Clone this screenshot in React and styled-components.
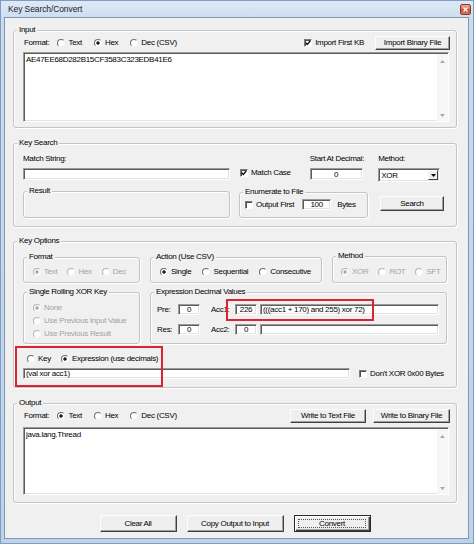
import React from "react";
import styled, { createGlobalStyle } from "styled-components";

const GlobalStyle = createGlobalStyle`
  html, body {
    margin: 0;
    padding: 0;
  }
  body {
    width: 474px;
    height: 544px;
    overflow: hidden;
    font-family: "Liberation Sans", Arial, sans-serif;
    font-size: 8px;
    letter-spacing: -0.3px;
    line-height: 10px;
    color: #000;
  }
`;

const Window = styled.div`
  box-sizing: border-box;
  width: 474px;
  height: 544px;
  display: flex;
  flex-direction: column;
  border: 1px solid #7f9dc0;
  background: linear-gradient(180deg, #dde9f7 0%, #c9dbef 4%, #bed3ea 100%);
`;

const TitleBar = styled.div`
  height: 16px;
  flex-shrink: 0;
  display: flex;
  justify-content: space-between;
  padding: 0 2px 0 7px;
`;

const Title = styled.span`
  font-size: 8.5px;
  letter-spacing: -0.1px;
  line-height: 16px;
  color: #1c1c1c;
`;

const CloseBtn = styled.div`
  box-sizing: border-box;
  width: 11px;
  height: 11px;
  margin-top: 3px;
  display: flex;
  align-items: center;
  justify-content: center;
  border: 1px solid #8a3a2c;
  border-radius: 2px;
  background: linear-gradient(180deg, #eba596 0%, #d86f58 48%, #c2452c 52%, #d97553 100%);
`;

const Client = styled.div`
  flex: 1;
  box-sizing: border-box;
  margin: 0 4px 4px 3px;
  padding: 12px 11px 0 8px;
  display: flex;
  flex-direction: column;
  border: 1px solid #8396ad;
  background: #f0f0f0;
`;

const Group = styled.div`
  position: relative;
  box-sizing: border-box;
  flex-shrink: 0;
  width: ${({ $w }) => ($w ? `${$w}px` : "auto")};
  height: ${({ $h }) => `${$h}px`};
  margin: ${({ $m }) => $m || "0"};
  padding: ${({ $pad }) => $pad || "0"};
  border: 1px solid #c4c4c4;
  border-radius: 3px;
  box-shadow: inset 1px 1px 0 #fff, 1px 1px 0 #fff;
`;

const Caption = styled.span`
  position: absolute;
  top: -6px;
  left: 3px;
  padding: 0 2px;
  line-height: 10px;
  white-space: nowrap;
  background: #f0f0f0;
`;

const Row = styled.div`
  display: flex;
  align-items: ${({ $align }) => $align || "center"};
  height: ${({ $h }) => ($h ? `${$h}px` : "auto")};
  margin-top: ${({ $mt }) => ($mt ? `${$mt}px` : "0")};
  margin-left: ${({ $ml }) => ($ml ? `${$ml}px` : "0")};
  gap: ${({ $gap }) => ($gap ? `${$gap}px` : "0")};
`;

const Column = styled.div`
  display: flex;
  flex-direction: column;
  gap: ${({ $gap }) => ($gap ? `${$gap}px` : "0")};
  margin-left: ${({ $ml }) => ($ml ? `${$ml}px` : "0")};
  margin-top: ${({ $mt }) => ($mt ? `${$mt}px` : "0")};
`;

const Text = styled.span`
  white-space: nowrap;
  color: ${({ $off }) => ($off ? "#a3a3a3" : "#000")};
  width: ${({ $w }) => ($w ? `${$w}px` : "auto")};
  margin-left: ${({ $ml }) => ($ml ? `${$ml}px` : "0")};
  flex-shrink: 0;
`;

const Spacer = styled.div`
  flex: 1;
`;

const OptionLabel = styled.span`
  display: inline-flex;
  align-items: center;
  gap: 3px;
  height: 10px;
  white-space: nowrap;
  color: ${({ $off }) => ($off ? "#a3a3a3" : "#000")};
`;

const RadioDot = styled.span`
  box-sizing: border-box;
  width: 8px;
  height: 8px;
  flex-shrink: 0;
  border-radius: 50%;
  border: 1px solid;
  border-color: ${({ $off }) =>
    $off ? "#b4b4b4 #f4f4f4 #f4f4f4 #b4b4b4" : "#6e6e6e #f4f4f4 #f4f4f4 #6e6e6e"};
  background: ${({ $on, $off }) =>
    $on
      ? `radial-gradient(circle, ${$off ? "#a8a8a8" : "#1e1e1e"} 0 1.4px, #fff 1.9px)`
      : "#fff"};
`;

const BoxMark = styled.span`
  box-sizing: border-box;
  width: 8px;
  height: 8px;
  flex-shrink: 0;
  display: flex;
  align-items: center;
  justify-content: center;
  border: 1px solid;
  border-color: #7a7a7a #fff #fff #7a7a7a;
  box-shadow: inset 1px 1px 0 #505050;
  background: #fff;
`;

const Button = styled.div`
  box-sizing: border-box;
  position: relative;
  flex-shrink: 0;
  width: ${({ $w }) => `${$w}px`};
  height: ${({ $h }) => `${$h || 14}px`};
  margin-left: ${({ $ml }) => ($ml ? `${$ml}px` : "0")};
  margin-top: ${({ $mt }) => ($mt ? `${$mt}px` : "0")};
  display: flex;
  align-items: center;
  justify-content: center;
  white-space: nowrap;
  background: #efefef;
  border: 1px solid;
  border-color: ${({ $default }) =>
    $default ? "#2a2a2a" : "#fdfdfd #404040 #404040 #fdfdfd"};
  box-shadow: ${({ $default }) =>
    $default
      ? "inset 1px 1px 0 #fff, inset -1px -1px 0 #404040, inset -2px -2px 0 #a0a0a0"
      : "inset -1px -1px 0 #a0a0a0"};

  &::after {
    content: "";
    display: ${({ $default }) => ($default ? "block" : "none")};
    position: absolute;
    inset: 3px 4px 3px 3px;
    border: 1px dotted #555;
  }
`;

const Field = styled.div`
  box-sizing: border-box;
  flex-shrink: 0;
  position: relative;
  width: ${({ $w }) => `${$w}px`};
  height: ${({ $h }) => `${$h || 11}px`};
  margin-left: ${({ $ml }) => ($ml ? `${$ml}px` : "0")};
  margin-top: ${({ $mt }) => ($mt ? `${$mt}px` : "0")};
  display: flex;
  align-items: ${({ $top }) => ($top ? "flex-start" : "center")};
  justify-content: ${({ $center }) => ($center ? "center" : "flex-start")};
  padding: ${({ $top }) => ($top ? "2px 0 0 2px" : "0 2px")};
  white-space: nowrap;
  overflow: hidden;
  line-height: 9px;
  background: #fff;
  border: 1px solid;
  border-color: #9b9b9b #fff #fff #9b9b9b;
  box-shadow: inset 1px 1px 0 #5c5c5c, inset -1px -1px 0 #e3e3e3;
`;

const MemoText = styled.span`
  flex: 1;
`;

const ScrollBar = styled.div`
  align-self: stretch;
  width: 11px;
  margin: -1px 0 0;
  display: flex;
  flex-direction: column;
  justify-content: space-between;
  align-items: center;
  padding: 6px 0 4px;
  background: #f6f6f6;
`;

const DropButton = styled.div`
  position: absolute;
  top: 1px;
  right: 1px;
  bottom: 1px;
  width: 10px;
  box-sizing: border-box;
  display: flex;
  align-items: center;
  justify-content: center;
  background: #efefef;
  border: 1px solid;
  border-color: #fdfdfd #404040 #404040 #fdfdfd;
`;

const Highlight = styled.div`
  position: absolute;
  box-sizing: border-box;
  left: ${({ $x }) => `${$x}px`};
  top: ${({ $y }) => `${$y}px`};
  width: ${({ $w }) => `${$w}px`};
  height: ${({ $h }) => `${$h}px`};
  border: 2px solid #dc2431;
  pointer-events: none;
`;

const BottomBar = styled.div`
  display: flex;
  justify-content: center;
  gap: 10px;
  margin-top: 12px;
`;

const Arrow = ({ down }) => (
  <svg width="5" height="3" viewBox="0 0 5 3">
    <path d={down ? "M0 0H5L2.5 3Z" : "M0 3H5L2.5 0Z"} fill="#a9a9a9" />
  </svg>
);

const Radio = ({ label, on, off }) => (
  <OptionLabel $off={off}>
    <RadioDot $on={on} $off={off} />
    {label}
  </OptionLabel>
);

const Check = ({ label, on }) => (
  <OptionLabel>
    <BoxMark>
      {on && (
        <svg width="6" height="6" viewBox="0 0 6 6">
          <path d="M0.8 2.8L2.3 4.4L5.2 1" fill="none" stroke="#111" strokeWidth="1.4" />
        </svg>
      )}
    </BoxMark>
    {label}
  </OptionLabel>
);

const Memo = ({ w, h, children }) => (
  <Field $w={w} $h={h} $top>
    <MemoText>{children}</MemoText>
    <ScrollBar>
      <Arrow />
      <Arrow down />
    </ScrollBar>
  </Field>
);

const FormatRadios = ({ selected }) => (
  <Row $gap={12} $ml={8}>
    {["Text", "Hex", "Dec (CSV)"].map((name) => (
      <Radio key={name} label={name} on={name === selected} />
    ))}
  </Row>
);

export default function App() {
  return (
    <>
      <GlobalStyle />
      <Window>
        <TitleBar>
          <Title>Key Search/Convert</Title>
          <CloseBtn>
            <svg width="5" height="5" viewBox="0 0 5 5">
              <path d="M0.5 0.5L4.5 4.5M4.5 0.5L0.5 4.5" stroke="#fff" strokeWidth="1.3" />
            </svg>
          </CloseBtn>
        </TitleBar>

        <Client>
          {/* Input */}
          <Group $h={98} $pad="5px 6px 0 9px">
            <Caption>Input</Caption>
            <Row $h={14}>
              <Text $ml={1}>Format:</Text>
              <FormatRadios selected="Hex" />
              <Spacer />
              <Check label="Import First KB" on />
              <Button $w={75} $ml={11}>Import Binary File</Button>
            </Row>
            <Row $mt={2}>
              <Memo w={426} h={70}>AE47EE68D282B15CF3583C323EDB41E6</Memo>
            </Row>
          </Group>

          {/* Key Search */}
          <Group $h={84} $m="15px 0 0" $pad="10px 0 0 9px">
            <Caption>Key Search</Caption>
            <Row $align="flex-start">
              <Column $gap={4}>
                <Text>Match String:</Text>
                <Field $w={207} $h={12} />
              </Column>
              <Column $ml={10} $mt={13}>
                <Row $h={12}>
                  <Check label="Match Case" on />
                </Row>
              </Column>
              <Column $gap={4} $ml={19}>
                <Text>Start At Decimal:</Text>
                <Field $w={53} $h={12} $center>0</Field>
              </Column>
              <Column $gap={4} $ml={14}>
                <Text>Method:</Text>
                <Field $w={62} $h={14}>
                  XOR
                  <DropButton>
                    <svg width="5" height="3" viewBox="0 0 5 3">
                      <path d="M0 0H5L2.5 3Z" fill="#000" />
                    </svg>
                  </DropButton>
                </Field>
              </Column>
            </Row>
            <Row $align="flex-start" $mt={9}>
              <Group $w={207} $h={27}>
                <Caption>Result</Caption>
              </Group>
              <Group $w={129} $h={26} $m="1px 0 0 9px" $pad="6px 0 0 5px">
                <Caption>Enumerate to File</Caption>
                <Row $h={11}>
                  <Check label="Output First" />
                  <Field $w={29} $h={11} $ml={8} $center>100</Field>
                  <Text $ml={6}>Bytes</Text>
                </Row>
              </Group>
              <Button $w={64} $h={15} $ml={12} $mt={5}>Search</Button>
            </Row>
          </Group>

          {/* Key Options */}
          <Group $h={147} $m="14px 0 0" $pad="15px 0 0 9px">
            <Caption>Key Options</Caption>
            <Row $align="flex-start">
              <Group $w={117} $h={26} $pad="9px 0 0 9px">
                <Caption>Format</Caption>
                <Row $gap={10}>
                  <Radio label="Text" on off />
                  <Radio label="Hex" off />
                  <Radio label="Dec" off />
                </Row>
              </Group>
              <Group $w={172} $h={26} $m="0 0 0 10px" $pad="9px 0 0 9px">
                <Caption>Action (Use CSV)</Caption>
                <Row $gap={11}>
                  <Radio label="Single" on />
                  <Radio label="Sequential" />
                  <Radio label="Consecutive" />
                </Row>
              </Group>
              <Group $w={115} $h={27} $m="-1px 0 0 10px" $pad="10px 0 0 8px">
                <Caption>Method</Caption>
                <Row $gap={10}>
                  <Radio label="XOR" on off />
                  <Radio label="ROT" off />
                  <Radio label="SFT" off />
                </Row>
              </Group>
            </Row>

            <Row $align="flex-start" $mt={9}>
              <Group $w={117} $h={52} $pad="10px 0 0 9px">
                <Caption>Single Rolling XOR Key</Caption>
                <Column $gap={3}>
                  <Radio label="None" on off />
                  <Radio label="Use Previous Input Value" off />
                  <Radio label="Use Previous Result" off />
                </Column>
              </Group>
              <Group $w={297} $h={52} $m="0 0 0 10px" $pad="11px 0 0 6px">
                <Caption>Expression Decimal Values</Caption>
                <Column $gap={9}>
                  <Row $h={11}>
                    <Text $w={21}>Pre:</Text>
                    <Field $w={22} $center>0</Field>
                    <Text $w={24} $ml={11}>Acc1:</Text>
                    <Field $w={22} $center>226</Field>
                    <Field $w={179} $ml={3}>(((acc1 + 170) and 255) xor 72)</Field>
                  </Row>
                  <Row $h={11}>
                    <Text $w={21}>Res:</Text>
                    <Field $w={22} $center>0</Field>
                    <Text $w={24} $ml={11}>Acc2:</Text>
                    <Field $w={22} $center>0</Field>
                    <Field $w={179} $ml={3} />
                  </Row>
                </Column>
                <Highlight $x={75} $y={6} $w={148} $h={22} />
              </Group>
            </Row>

            <Row $h={10} $mt={10} $ml={4} $gap={10}>
              <Radio label="Key" />
              <Radio label="Expression (use decimals)" on />
            </Row>
            <Row $mt={4} $h={11}>
              <Field $w={327}>(val xor acc1)</Field>
              <Row $ml={9}>
                <Check label="Don't XOR 0x00 Bytes" />
              </Row>
            </Row>
            <Highlight $x={1} $y={104} $w={148} $h={41} />
          </Group>

          {/* Output */}
          <Group $h={100} $m="15px 0 0" $pad="5px 6px 0 9px">
            <Caption>Output</Caption>
            <Row $h={14}>
              <Text $ml={1}>Format:</Text>
              <FormatRadios selected="Text" />
              <Spacer />
              <Button $w={76}>Write to Text File</Button>
              <Button $w={77} $ml={7}>Write to Binary File</Button>
            </Row>
            <Row $mt={4}>
              <Memo w={426} h={68}>java.lang.Thread</Memo>
            </Row>
          </Group>

          <BottomBar>
            <Button $w={77} $h={17}>Clear All</Button>
            <Button $w={97} $h={17}>Copy Output to Input</Button>
            <Button $w={77} $h={17} $default>Convert</Button>
          </BottomBar>
        </Client>
      </Window>
    </>
  );
}
